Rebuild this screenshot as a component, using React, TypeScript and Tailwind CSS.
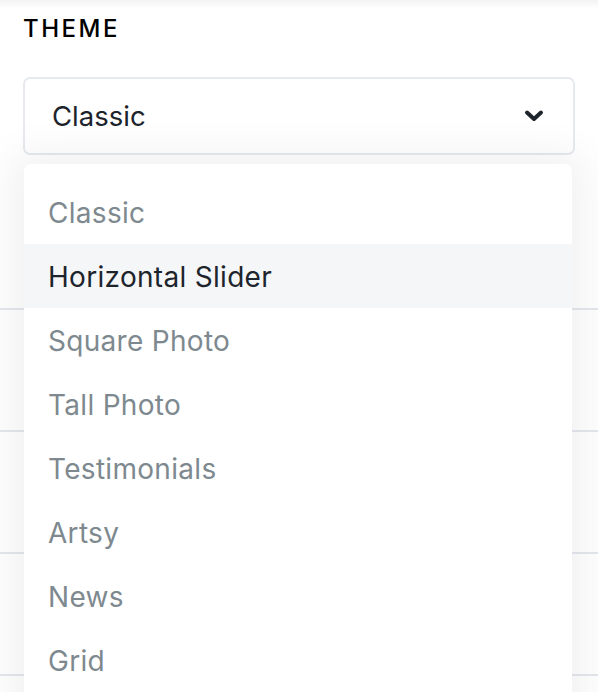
import React from "react";

const items = [
  "Classic",
  "Horizontal Slider",
  "Square Photo",
  "Tall Photo",
  "Testimonials",
  "Artsy",
  "News",
  "Grid",
];

export default function App() {
  return (
    <div
      className="relative w-[598px] h-[692px] overflow-hidden bg-white"
      style={{ fontFamily: "Inter, 'Open Sans', sans-serif" }}
    >
      <div className="pointer-events-none absolute inset-x-0 top-0 h-[8px] bg-gradient-to-b from-[#f3f3f4] to-white" />
      <div className="relative px-[23px] pt-[15px]">
        <div className="text-[24px] leading-[27px] font-medium text-black tracking-[2.5px]">THEME</div>
        <div className="mt-[35px] h-[78px] rounded-[7px] border-2 border-[#e6e9ee] flex items-center justify-between pl-[27px] pr-[29px]">
          <span className="text-[27.5px] leading-none pt-[2px] text-[#1d242c]">Classic</span>
          <svg width="20" height="14" viewBox="0 0 20 14">
            <path d="M3 3.5 L10 10 L17 3.5" fill="none" stroke="#1d242c" strokeWidth="4" strokeLinecap="round" strokeLinejoin="round" />
          </svg>
        </div>
      </div>
      <div className="mt-[33px]">
        {[0, 1, 2, 3].map((i) => (
          <div key={i} className="h-[122px] border-b-2 border-[#e4e8ee]" />
        ))}
      </div>
      <div className="absolute left-[24px] top-[164px] w-[548px] h-[560px] rounded-[7px] bg-white pt-[16px] shadow-[0_0_40px_12px_rgba(0,0,0,0.06)]">
        {items.map((t, i) => (
          <div
            key={t}
            className={
              i === 1
                ? "h-[64px] flex items-center pl-[24px] pt-[2px] bg-[#f5f6f8] text-[28px] tracking-[0.3px] text-[#1d242c]"
                : "h-[64px] flex items-center pl-[24px] pt-[2px] text-[28px] tracking-[0.3px] text-[#7e898f]"
            }
          >
            {t}
          </div>
        ))}
      </div>
    </div>
  );
}
